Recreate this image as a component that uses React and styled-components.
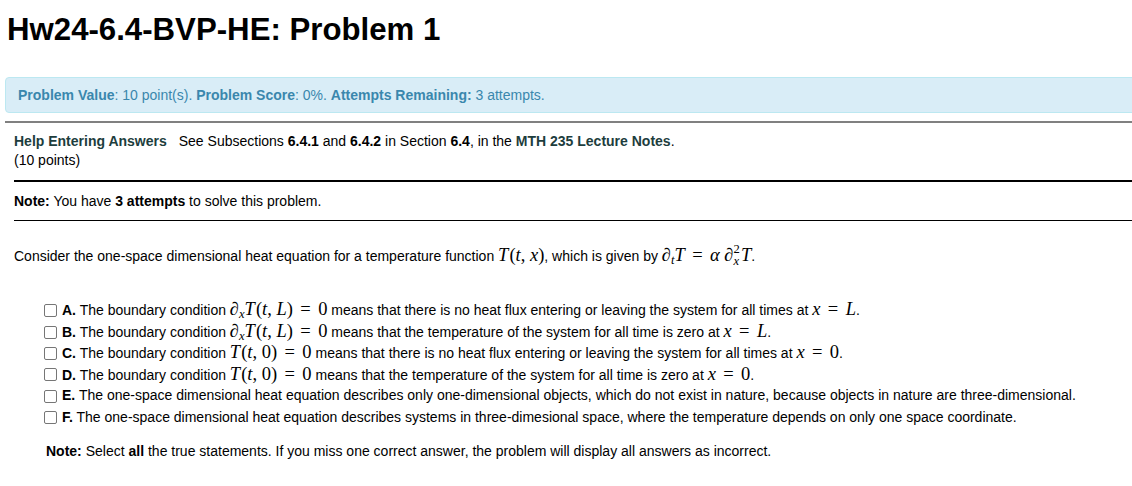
import React from "react";
import styled, { createGlobalStyle } from "styled-components";

const GlobalStyle = createGlobalStyle`
  html, body { margin: 0; padding: 0; background: #fff; overflow: hidden; }
  body { font-family: "Liberation Sans", Arial, sans-serif; color: #000; }
`;

const Page = styled.div`
  width: 1170px;
  padding-left: 5px;
  box-sizing: border-box;
`;

const Title = styled.h1`
  margin: 13px 0 0 2px;
  font-size: 31.2px;
  line-height: 34px;
  font-weight: bold;
  color: #000;
`;

const Alert = styled.div`
  margin-top: 30px;
  border: 1px solid #bce8f1;
  border-radius: 4px;
  background: #d9edf7;
  padding: 8px 12px;
  font-size: 14px;
  line-height: 18px;
  color: #3a87ad;
`;

const Rule = styled.div`
  height: ${(p) => (p.$heavy ? "2px" : "1.5px")};
  background: ${(p) => (p.$heavy ? "#808080" : "#000")};
  margin-top: ${(p) => p.$top || 0}px;
  margin-left: ${(p) => p.$indent || 0}px;
`;

const Section = styled.div`
  padding-left: 9px;
  margin-top: ${(p) => p.$top || 0}px;
  font-size: 14px;
  line-height: ${(p) => p.$lh || 19}px;
`;

const HelpLink = styled.b`
  color: #1d3d3d;
  margin-right: 12px;
`;

const Link = styled.b`
  color: #1d3d3d;
`;

const Options = styled.div`
  margin-top: 33px;
  padding-left: 39px;
  font-size: 14px;
`;

const Option = styled.label`
  display: flex;
  align-items: center;
  height: 21.4px;
  white-space: nowrap;
`;

const Box = styled.span`
  display: inline-block;
  width: 13px;
  height: 13px;
  box-sizing: border-box;
  border: 1px solid #767676;
  border-radius: 2px;
  background: #fff;
  margin-right: 5px;
  flex: none;
  position: relative;
  top: 1px;
`;

const FinalNote = styled.div`
  margin-top: 15px;
  padding-left: 41px;
  font-size: 14px;
  line-height: 19px;
`;

const M = styled.span`
  font-family: "Liberation Serif", "Times New Roman", serif;
  font-size: 18.5px;
  white-space: nowrap;
  line-height: 1;
`;

const V = styled.i`
  font-style: italic;
  margin-right: ${(p) => p.$r || 0}px;
`;

const Sub = styled.span`
  font-size: 0.68em;
  font-style: italic;
  vertical-align: -0.25em;
  line-height: 0;
`;

const Stack = styled.span`
  display: inline-block;
  font-size: 0.68em;
  line-height: 1;
  vertical-align: -0.35em;
  margin: -0.6em 0.1em -0.6em 0;
  & > span { display: block; }
  & > i { display: block; font-style: italic; }
`;

const Rel = styled.span`
  margin: 0 0.4em;
`;

const Comma = styled.span`
  margin-right: 0.25em;
`;

const Eq = () => <Rel>=</Rel>;

const Dx = ({ s = "x" }) => (
  <>
    <V>∂</V>
    <Sub>{s}</Sub>
  </>
);

const TtL = () => (
  <M>
    <Dx />
    <V $r={1}>T</V>(<V>t</V><Comma>,</Comma><V>L</V>)<Eq />0
  </M>
);

const Tt0 = () => (
  <M>
    <V $r={1}>T</V>(<V>t</V><Comma>,</Comma>0)<Eq />0
  </M>
);

const XEq = ({ v }) => (
  <M>
    <V>x</V>
    <Eq />
    {v === "L" ? <V>L</V> : "0"}
  </M>
);

const options = [
  ["A.", <>The boundary condition <TtL /> means that there is no heat flux entering or leaving the system for all times at <XEq v="L" />.</>],
  ["B.", <>The boundary condition <TtL /> means that the temperature of the system for all time is zero at <XEq v="L" />.</>],
  ["C.", <>The boundary condition <Tt0 /> means that there is no heat flux entering or leaving the system for all times at <XEq v="0" />.</>],
  ["D.", <>The boundary condition <Tt0 /> means that the temperature of the system for all time is zero at <XEq v="0" />.</>],
  ["E.", <>The one-space dimensional heat equation describes only one-dimensional objects, which do not exist in nature, because objects in nature are three-dimensional.</>],
  ["F.", <>The one-space dimensional heat equation describes systems in three-dimesional space, where the temperature depends on only one space coordinate.</>],
];

export default function App() {
  return (
    <>
      <GlobalStyle />
      <Page>
        <Title>Hw24-6.4-BVP-HE: Problem 1</Title>
        <Alert>
          <b>Problem Value</b>: 10 point(s). <b>Problem Score</b>: 0%. <b>Attempts Remaining:</b> 3 attempts.
        </Alert>
        <Rule $heavy $top={8} />
        <Section $top={9}>
          <HelpLink>Help Entering Answers</HelpLink>
          See Subsections <b>6.4.1</b> and <b>6.4.2</b> in Section <b>6.4</b>, in the{" "}
          <Link>MTH 235 Lecture Notes</Link>.
          <br />
          (10 points)
        </Section>
        <Rule $top={10} $indent={9} />
        <Section $top={10}>
          <b>Note:</b> You have <b>3 attempts</b> to solve this problem.
        </Section>
        <Rule $top={9} $indent={9} />
        <Section $top={25} $lh={20}>
          Consider the one-space dimensional heat equation for a temperature function{" "}
          <M>
            <V $r={1}>T</V>(<V>t</V><Comma>,</Comma><V>x</V>)
          </M>
          , which is given by{" "}
          <M>
            <Dx s="t" />
            <V>T</V>
            <Eq />
            <V>α</V>&nbsp;<V>∂</V>
            <Stack>
              <span>2</span>
              <i>x</i>
            </Stack>
            <V>T</V>
          </M>
          .
        </Section>
        <Options>
          {options.map(([k, t]) => (
            <Option key={k}>
              <Box />
              <span>
                <b>{k}</b> {t}
              </span>
            </Option>
          ))}
        </Options>
        <FinalNote>
          <b>Note:</b> Select <b>all</b> the true statements. If you miss one correct answer, the problem will display all answers as incorrect.
        </FinalNote>
      </Page>
    </>
  );
}
